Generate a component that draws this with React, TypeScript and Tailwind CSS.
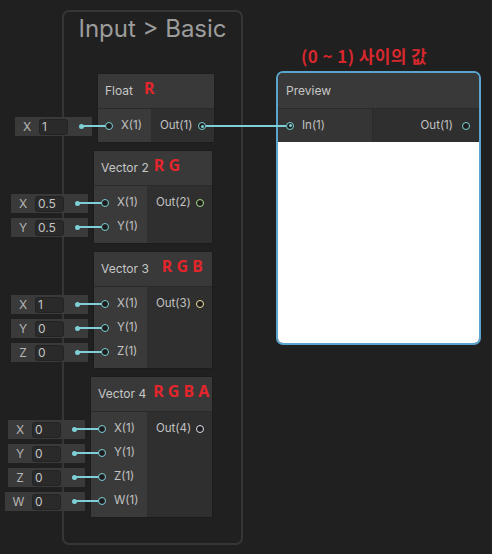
import React from "react";

type Field = { label: string; value: string; width: string };

type NodeData = {
  pos: string;
  nodeW: string;
  inW: string;
  title: string;
  tag: string;
  tagGap: string;
  inputs: string[];
  fields: Field[];
  out: string;
  outPort: string;
  outFilled?: boolean;
};

const nodes: NodeData[] = [
  {
    pos: "left-[15px] top-[73px]",
    nodeW: "w-[118px]",
    inW: "w-[53px]",
    title: "Float",
    tag: "R",
    tagGap: "ml-[11px]",
    inputs: ["X(1)"],
    fields: [{ label: "X", value: "1", width: "w-[77px]" }],
    out: "Out(1)",
    outPort: "border-[#7ecfd6]",
    outFilled: true,
  },
  {
    pos: "left-[11px] top-[150px]",
    nodeW: "w-[120px]",
    inW: "w-[53px]",
    title: "Vector 2",
    tag: "R G",
    tagGap: "ml-[5px]",
    inputs: ["X(1)", "Y(1)"],
    fields: [
      { label: "X", value: "0.5", width: "w-[77px]" },
      { label: "Y", value: "0.5", width: "w-[77px]" },
    ],
    out: "Out(2)",
    outPort: "border-[#a9dc8e]",
  },
  {
    pos: "left-[11px] top-[251px]",
    nodeW: "w-[120px]",
    inW: "w-[53px]",
    title: "Vector 3",
    tag: "R G B",
    tagGap: "ml-[13px]",
    inputs: ["X(1)", "Y(1)", "Z(1)"],
    fields: [
      { label: "X", value: "1", width: "w-[77px]" },
      { label: "Y", value: "0", width: "w-[77px]" },
      { label: "Z", value: "0", width: "w-[77px]" },
    ],
    out: "Out(3)",
    outPort: "border-[#ece69a]",
  },
  {
    pos: "left-[5px] top-[376px]",
    nodeW: "w-[123px]",
    inW: "w-[56px]",
    title: "Vector 4",
    tag: "R G B A",
    tagGap: "ml-[7px]",
    inputs: ["X(1)", "Y(1)", "Z(1)", "W(1)"],
    fields: [
      { label: "X", value: "0", width: "w-[77px]" },
      { label: "Y", value: "0", width: "w-[77px]" },
      { label: "Z", value: "0", width: "w-[77px]" },
      { label: "W", value: "0", width: "w-[80px]" },
    ],
    out: "Out(4)",
    outPort: "border-[#e4dcee]",
  },
];

// wire segments: [x1, x2, y]
const wires: [number, number, number][] = [
  [81.5, 105.5, 126],
  [77.5, 101.5, 203],
  [77.5, 101.5, 227],
  [77.5, 101.5, 304],
  [77.5, 101.5, 328],
  [77.5, 101.5, 352],
  [74.5, 98.5, 429],
  [74.5, 98.5, 453],
  [74.5, 98.5, 477],
  [74.5, 98.5, 501],
  [206, 286, 126],
];

function Port({ color, filled }: { color: string; filled?: boolean }) {
  return (
    <span className={`w-[8px] h-[8px] shrink-0 rounded-full border-[1.5px] bg-[#1d1d1d] flex items-center justify-center ${color}`}>
      {filled && <span className="w-[3px] h-[3px] rounded-full bg-[#7ecfd6]" />}
    </span>
  );
}

function InlineField({ f }: { f: Field }) {
  return (
    <div className={`h-[19px] flex items-center bg-[#3a3a3a] ${f.width}`}>
      <span className="flex-1 text-center text-[12px] text-[#b4b4b4]">{f.label}</span>
      <span className="w-[29px] h-[16px] rounded-[3px] bg-[#2a2a2a] border border-[#232323] pl-[2px] text-[12px] leading-[14px] text-[#c4c4c4]">
        {f.value}
      </span>
      <span className="w-[24px] flex justify-end pr-[8px]">
        <span className="w-[5px] h-[5px] rounded-full bg-[#7ecfd6]" />
      </span>
    </div>
  );
}

function GraphNode({ n }: { n: NodeData }) {
  return (
    <div className={`absolute flex items-start gap-[5px] ${n.pos}`}>
      <div className="flex flex-col items-end gap-[5px] pt-[44px]">
        {n.fields.map((f) => (
          <InlineField key={f.label} f={f} />
        ))}
      </div>
      <div className={`shrink-0 border border-[#1c1c1c] rounded-[2px] ${n.nodeW}`}>
        <div className="h-[35px] flex items-center px-[7px] bg-[#393939] border-b border-[#2a2a2a] whitespace-nowrap">
          <span className="shrink-0 text-[12px] text-[#c6c6c6]">{n.title}</span>
          <span className={`shrink-0 mb-[6px] text-[16px] font-bold text-[#e2262c] whitespace-pre leading-none ${n.tagGap}`}
            style={{ fontFamily: "'Noto Sans', sans-serif" }}>
            {n.tag}
          </span>
        </div>
        <div className="flex">
          <div className={`shrink-0 bg-[#3a3a3a] pt-[5px] pb-[4px] ${n.inW}`}>
            {n.inputs.map((i) => (
              <div key={i} className="h-[24px] flex items-center pl-[7px] gap-[8px] text-[11.5px] text-[#c2c2c2]">
                <Port color="border-[#7ecfd6]" />
                {i}
              </div>
            ))}
          </div>
          <div className="flex-1 bg-[#2f2f2f] pt-[5px]">
            <div className="h-[24px] flex items-center justify-between pl-[9px] pr-[8px] text-[11.5px] text-[#c2c2c2]">
              {n.out}
              <Port color={n.outPort} filled={n.outFilled} />
            </div>
          </div>
        </div>
      </div>
    </div>
  );
}

export default function App() {
  return (
    <div className="relative w-[492px] h-[554px] overflow-hidden bg-[#202020]"
      style={{ fontFamily: "Inter, 'Noto Sans', sans-serif" }}>
      {/* Group */}
      <div className="absolute left-[62px] top-[10px] w-[181px] h-[535px] rounded-[7px] border-2 border-[#363636]">
        <div className="h-[34px] flex items-center justify-center text-[24px] text-[#9c9c9c]">Input &gt; Basic</div>
      </div>

      {nodes.map((n) => (
        <GraphNode key={n.title} n={n} />
      ))}

      {/* Annotation */}
      <div className="absolute left-[301px] top-[43px] text-[17px] font-bold tracking-[0.4px] text-[#d8282d] whitespace-pre"
        style={{ fontFamily: "'Noto Sans CJK KR', 'Noto Sans', sans-serif" }}>
        (0 ~ 1) 사이의 값
      </div>

      {/* Preview node */}
      <div className="absolute left-[276px] top-[71px] w-[205px] h-[274px] flex flex-col rounded-[7px] border-2 border-[#5aa5ce] overflow-hidden bg-[#2f2f2f]">
        <div className="h-[36px] shrink-0 flex items-center px-[8px] bg-[#393939] border-b border-[#2a2a2a] text-[12px] text-[#c6c6c6]">
          Preview
        </div>
        <div className="h-[33px] shrink-0 flex text-[11.5px] text-[#c2c2c2]">
          <div className="w-[95px] flex items-center pl-[8px] gap-[8px] bg-[#353535] border-r border-[#2a2a2a]">
            <Port color="border-[#7ecfd6]" filled />
            In(1)
          </div>
          <div className="flex-1 flex items-center justify-end pr-[9px] gap-[9px] bg-[#2f2f2f]">
            Out(1)
            <Port color="border-[#7ecfd6]" />
          </div>
        </div>
        <div className="flex-1 bg-white" />
      </div>

      {/* Wires */}
      <svg className="absolute inset-0 pointer-events-none" width="492" height="554">
        {wires.map(([x1, x2, y], i) => (
          <line key={i} x1={x1} y1={y} x2={x2} y2={y} stroke="#7ecfd6" strokeWidth="2" />
        ))}
      </svg>
    </div>
  );
}
